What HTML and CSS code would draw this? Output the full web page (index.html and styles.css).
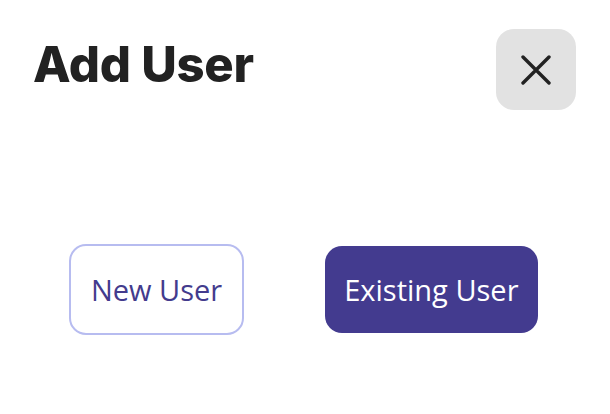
FILE: index.html
```html
<!DOCTYPE html>
<html lang="en">
<head>
<meta charset="utf-8">
<title>Add User</title>
<link rel="stylesheet" href="styles.css">
</head>
<body>
<div class="dialog">
  <header class="header">
    <h1 class="title">Add User</h1>
    <button class="close" aria-label="Close">
      <svg width="30" height="30" viewBox="0 0 30 30" aria-hidden="true">
        <path d="M2 2 L28 28 M28 2 L2 28" stroke="#222222" stroke-width="3.4" stroke-linecap="round" fill="none"/>
      </svg>
    </button>
  </header>
  <div class="actions">
    <button class="btn btn-outline">New User</button>
    <button class="btn btn-solid">Existing User</button>
  </div>
</div>
</body>
</html>
```
FILE: styles.css
```css
html, body {
  margin: 0;
  padding: 0;
  background: #ffffff;
}
.dialog {
  width: 610px;
  height: 414px;
  box-sizing: border-box;
  padding: 29px 34px 0 33px;
  display: flex;
  flex-direction: column;
}
.header {
  display: flex;
  justify-content: space-between;
  align-items: flex-start;
}
.title {
  margin: 0;
  padding-top: 8px;
  font-family: Inter, "Liberation Sans", sans-serif;
  font-weight: 800;
  font-size: 49px;
  line-height: 56px;
  color: #222222;
  letter-spacing: -0.3px;
}
.close {
  width: 80px;
  height: 81px;
  border: none;
  border-radius: 18px;
  background: #e2e2e2;
  display: flex;
  align-items: center;
  justify-content: center;
  padding: 0;
  cursor: pointer;
}
.actions {
  margin-top: 134px;
  padding-left: 36px;
  display: flex;
  justify-content: flex-start;
  align-items: center;
  gap: 81px;
}
.btn {
  font-family: "Open Sans", "Noto Sans", sans-serif;
  font-size: 29px;
  font-weight: 400;
  border-radius: 17px;
  cursor: pointer;
  box-sizing: border-box;
  display: flex;
  align-items: center;
  justify-content: center;
}
.btn-outline {
  height: 91px;
  padding: 0 20px;
  border: 2px solid #b7bcf0;
  background: #ffffff;
  color: #433b8d;
}
.btn-solid {
  height: 87px;
  padding: 0 19px;
  border: none;
  background: #433b8f;
  color: #ffffff;
}
```
